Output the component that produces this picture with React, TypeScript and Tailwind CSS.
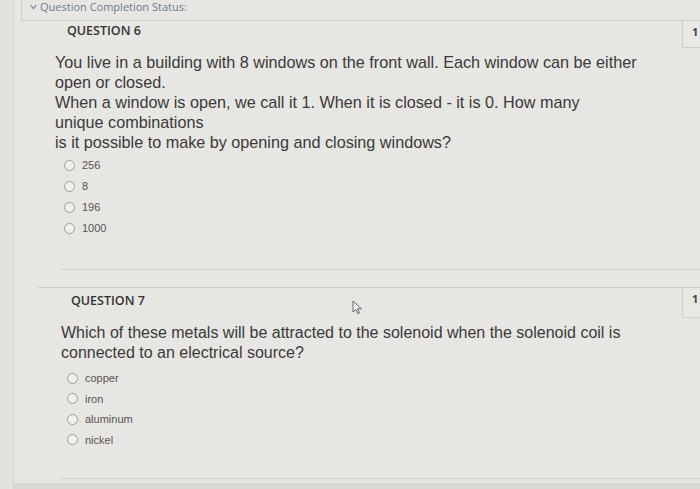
import React from 'react';

const q6Lines = [
  'You live in a building with 8 windows on the front wall. Each window can be either',
  'open or closed.',
  'When a window is open, we call it 1. When it is closed - it is 0. How many',
  'unique combinations',
  'is it possible to make by opening and closing windows?',
];

const q7Lines = [
  'Which of these metals will be attracted to the solenoid when the solenoid coil is',
  'connected to an electrical source?',
];

const Radio = () => (
  <span className="inline-block w-[11px] h-[11px] rounded-full border border-[#9c9c9a] bg-[#f1f0ed] shrink-0" />
);

const Option = ({ label, row }: { label: string; row: string }) => (
  <div className={`flex items-center gap-[7px] shrink-0 ${row}`}>
    <Radio />
    <span className="text-[11px] text-[#555553] font-['Liberation_Sans',Arial,sans-serif]">{label}</span>
  </div>
);

const PointsBox = ({ h }: { h: string }) => (
  <div className={`w-[18px] ${h} border-l border-b border-[#cfceca] bg-[#e9e8e5] pl-[9px] pt-[3px] text-[11px] font-bold text-[#444] font-['Open_Sans',sans-serif]`}>
    1
  </div>
);

const App = () => {
  return (
    <div className="relative w-[700px] h-[489px] overflow-hidden bg-[#e7e6e3] flex font-['Liberation_Sans',Arial,sans-serif]">
      {/* left page gutter */}
      <div className="w-[14px] shrink-0 border-r border-[#d3d2ce] bg-[#e3e2df]" />

      <div className="flex-1 flex flex-col">
        {/* completion status bar */}
        <div className="shrink-0 ml-[7px] h-[21px] border-l border-b border-[#cfceca] flex items-start gap-[3px] pl-[8px]">
          <svg width="7" height="6" viewBox="0 0 7 6" className="mt-[4px]">
            <path d="M0.8 1.2 L3.5 4.6 L6.2 1.2" fill="none" stroke="#8090a6" strokeWidth="1.3" />
          </svg>
          <span className="text-[11px] leading-[14px] text-[#6a7c94] font-['Open_Sans',sans-serif]">
            Question Completion Status:
          </span>
        </div>

        {/* question 6 */}
        <div className="shrink-0 flex flex-col">
          <div className="flex justify-between items-start h-[27px]">
            <span className="pl-[53px] pt-[1px] text-[12.5px] leading-[18px] font-semibold text-[#333] font-['Open_Sans',sans-serif]">
              QUESTION 6
            </span>
            <PointsBox h="h-[27px]" />
          </div>
          <div className="pl-[41px] mt-[4px] text-[16.2px] leading-[20px] text-[#3a3a3a]">
            {q6Lines.map((l) => (
              <div key={l} className="whitespace-nowrap">{l}</div>
            ))}
          </div>
          <div className="pl-[50px] mt-[3px] flex flex-col">
            {['256', '8', '196', '1000'].map((o) => (
              <Option key={o} label={o} row="h-[21px]" />
            ))}
          </div>
          <div className="ml-[46px] mt-[30px] border-t border-[#d2d1cd]" />
        </div>

        {/* question 7 */}
        <div className="shrink-0 mt-[17px] ml-[24px] border-t border-[#cdccc8] flex flex-col">
          <div className="flex justify-between items-start h-[30px]">
            <span className="pl-[33px] pt-[4px] text-[12.5px] leading-[18px] font-semibold text-[#333] font-['Open_Sans',sans-serif]">
              QUESTION 7
            </span>
            <PointsBox h="h-[30px]" />
          </div>
          <div className="pl-[23px] mt-[5px] text-[16px] leading-[20px] text-[#3a3a3a]">
            {q7Lines.map((l) => (
              <div key={l} className="whitespace-nowrap">{l}</div>
            ))}
          </div>
          <div className="pl-[29px] mt-[5px] flex flex-col">
            {['copper', 'iron', 'aluminum', 'nickel'].map((o) => (
              <Option key={o} label={o} row="h-[20.5px]" />
            ))}
          </div>
          <div className="ml-[23px] mt-[28px] border-t border-[#cfceca]" />
          <div className="mt-[4px] h-[10px] -ml-[24px] bg-[#d9d8d4]" />
        </div>
      </div>

      {/* mouse pointer */}
      <svg width="11" height="15" viewBox="0 0 11 15" className="absolute left-[352px] top-[300px]">
        <path
          d="M1 1 L1 12 L3.8 9.4 L5.8 13.6 L7.4 12.9 L5.5 8.8 L9.3 8.8 Z"
          fill="#f4f4f2"
          stroke="#555"
          strokeWidth="0.9"
          strokeLinejoin="round"
        />
      </svg>
    </div>
  );
};

export default App;
